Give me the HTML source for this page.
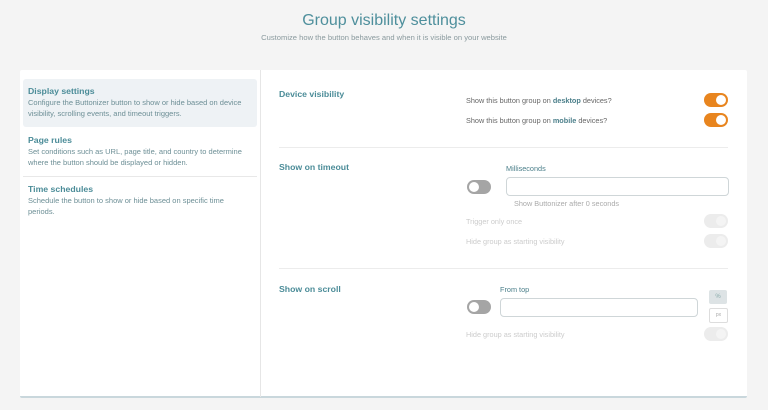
<!DOCTYPE html><html><head><style>
body{margin:0;width:768px;height:410px;background:#f4f4f4;font-family:"Liberation Sans",sans-serif;position:relative;overflow:hidden}
.a{position:absolute;white-space:nowrap}
.t{color:#4b8c98;font-weight:bold;font-size:8.7px}
.d{color:#6d8f96;font-size:7.5px;line-height:11px}
.r{color:#666;font-size:7.3px}
.r b{color:#4b7f8a}
.f{color:#ccc;font-size:7.3px}
.tg{position:absolute;width:24px;height:14px;border-radius:7px}
.tg:after{content:"";position:absolute;top:2px;width:10px;height:10px;border-radius:5px;background:#fff}
.on{background:#e8851f}.on:after{right:2px}
.off{background:#a5a5a5}.off:after{left:2px}
.dis{background:#ececec}.dis:after{right:2px;background:#f4f4f4;border:0}
.in{position:absolute;border:1px solid #cfd6d8;border-radius:4px;background:#fff;box-sizing:border-box}
.hr{position:absolute;left:279px;width:449px;height:1px;background:#ececec}
</style></head><body>
<div class="a" style="left:0;width:768px;text-align:center;top:12px;font-size:16px;color:#4e8f9c">Group visibility settings</div>
<div class="a" style="left:0;width:768px;text-align:center;top:33px;font-size:7.6px;color:#8a9a9e">Customize how the button behaves and when it is visible on your website</div>
<div class="a" style="left:20px;top:70px;width:727px;height:326px;background:#fff;border-bottom:2px solid #c9d7dc;border-radius:2px"></div>
<div class="a" style="left:260px;top:70px;width:1px;height:327px;background:#e6e6e6"></div>
<div class="a" style="left:23px;top:79px;width:234px;height:48px;background:#eef2f5;border-radius:3px"></div>
<div class="a" style="left:23px;top:176px;width:234px;height:1px;background:#e8e8e8"></div>
<div class="a t" style="left:28px;top:86px">Display settings</div>
<div class="a d" style="left:28px;top:97px">Configure the Buttonizer button to show or hide based on device<br>visibility, scrolling events, and timeout triggers.</div>
<div class="a t" style="left:28px;top:135px">Page rules</div>
<div class="a d" style="left:28px;top:146px">Set conditions such as URL, page title, and country to determine<br>where the button should be displayed or hidden.</div>
<div class="a t" style="left:28px;top:184px">Time schedules</div>
<div class="a d" style="left:28px;top:195px">Schedule the button to show or hide based on specific time<br>periods.</div>

<div class="a t" style="left:279px;top:89px">Device visibility</div>
<div class="a r" style="left:466px;top:96px">Show this button group on <b>desktop</b> devices?</div>
<div class="a r" style="left:466px;top:116px">Show this button group on <b>mobile</b> devices?</div>
<div class="tg on" style="left:704px;top:93px"></div>
<div class="tg on" style="left:704px;top:113px"></div>
<div class="hr" style="top:147px"></div>

<div class="a t" style="left:279px;top:162px">Show on timeout</div>
<div class="a r" style="left:506px;top:164px;color:#4b7f8a">Milliseconds</div>
<div class="tg off" style="left:467px;top:180px"></div>
<div class="in" style="left:506px;top:177px;width:223px;height:19px"></div>
<div class="a f" style="left:514px;top:199px;color:#aaa">Show Buttonizer after 0 seconds</div>
<div class="a f" style="left:466px;top:217px">Trigger only once</div>
<div class="tg dis" style="left:704px;top:214px"></div>
<div class="a f" style="left:466px;top:237px">Hide group as starting visibility</div>
<div class="tg dis" style="left:704px;top:234px"></div>
<div class="hr" style="top:268px"></div>

<div class="a t" style="left:279px;top:284px">Show on scroll</div>
<div class="a r" style="left:500px;top:285px;color:#4b7f8a">From top</div>
<div class="tg off" style="left:467px;top:300px"></div>
<div class="in" style="left:500px;top:298px;width:198px;height:19px"></div>
<div class="a" style="left:709px;top:290px;width:18px;height:14px;background:#dde3e5;border-radius:2px;color:#8aa;font-size:6px;text-align:center;line-height:14px">%</div>
<div class="a" style="left:709px;top:308px;width:17px;height:13px;border:1px solid #ddd;border-radius:2px;color:#aaa;font-size:5px;text-align:center;line-height:13px">px</div>
<div class="a f" style="left:466px;top:330px">Hide group as starting visibility</div>
<div class="tg dis" style="left:704px;top:327px"></div>
</body></html>
